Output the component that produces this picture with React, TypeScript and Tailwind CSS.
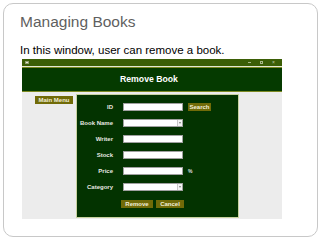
import React from "react";

const Field = ({ select }: { select?: boolean }) => (
  <div className="relative w-[60px] h-[8px] bg-white border border-[#a0a0a0]">
    {select && (
      <div className="absolute right-0 top-0 h-full w-[5px] border-l border-[#c8c8c8] bg-[#f4f4f4] flex items-center justify-center">
        <div className="w-0 h-0 border-l-[1.5px] border-r-[1.5px] border-t-[2px] border-l-transparent border-r-transparent border-t-[#7a7a7a]" />
      </div>
    )}
  </div>
);

const Row = ({ label, children }: { label: string; children: React.ReactNode }) => (
  <div className="flex items-center h-[8px]">
    <div className="w-[36px] text-right text-[6px] font-bold text-[#e8e8e0] leading-none whitespace-nowrap">{label}</div>
    <div className="ml-[10px] flex items-center">{children}</div>
  </div>
);

const Btn = ({ children, w }: { children: React.ReactNode; w: string }) => (
  <div className={`${w} h-[8px] bg-[#716b08] text-[#f0eed8] text-[6px] font-bold leading-none flex items-center justify-center`}>
    {children}
  </div>
);

export default function App() {
  return (
    <div
      className="w-[320px] h-[240px] bg-white pt-[3px] pl-[3px] pr-[2px] pb-[3px]"
      style={{ fontFamily: '"Liberation Sans", Arial, sans-serif' }}
    >
      <div className="h-full border border-[#c8c8c8] rounded-[10px] flex flex-col">
        <div className="mt-[10px] ml-[16px] text-[15.5px] leading-none text-[#5f5f5f]">Managing Books</div>
        <div className="mt-[15px] ml-[16px] text-[11.5px] leading-none text-black">In this window, user can remove a book.</div>
        <div className="mt-[3px] ml-[18px] w-[260px] h-[160px] flex flex-col">
          {/* title bar */}
          <div className="h-[7px] bg-[#3b5e06] flex items-center px-[3px]">
            <div className="w-[4px] h-[3px] bg-[#e8ecd8] border border-[#90a070]" />
            <div className="flex-1" />
            <div className="flex items-center gap-[9px] pr-[4px]">
              <div className="w-[3px] h-px bg-[#a8b888]" />
              <div className="w-[3px] h-[3px] border border-[#a8b888]" />
              <div className="text-[5px] leading-none text-[#c0c8a8]">×</div>
            </div>
          </div>
          <div className="h-px bg-[#e4e8d4]" />
          {/* header */}
          <div className="h-[25px] bg-[#053a00] border-y border-[#7c8a22] flex items-center pl-[98px]">
            <span className="text-[8.7px] font-bold text-white leading-none">Remove Book</span>
          </div>
          {/* body */}
          <div className="flex-1 bg-[#ececec] flex items-start pl-[13px] pt-[2px]">
            <div className="mt-[2px]">
              <Btn w="w-[38px]">Main Menu</Btn>
            </div>
            <div className="ml-[3px] w-[163px] h-[124px] bg-[#033300] border border-[#c8d2a0] flex flex-col gap-[8px] pt-[8px]">
              <Row label="ID">
                <Field />
                <div className="ml-[5px]">
                  <Btn w="w-[23px]">Search</Btn>
                </div>
              </Row>
              <Row label="Book Name">
                <Field select />
              </Row>
              <Row label="Writer">
                <Field />
              </Row>
              <Row label="Stock">
                <Field />
              </Row>
              <Row label="Price">
                <Field />
                <span className="ml-[5px] text-[5px] font-bold text-[#e0e0e0] leading-none">%</span>
              </Row>
              <Row label="Category">
                <Field select />
              </Row>
              <div className="flex items-center h-[8px] mt-[1px] pl-[44px] gap-[3px]">
                <Btn w="w-[32px]">Remove</Btn>
                <Btn w="w-[28px]">Cancel</Btn>
              </div>
            </div>
          </div>
        </div>
      </div>
    </div>
  );
}
